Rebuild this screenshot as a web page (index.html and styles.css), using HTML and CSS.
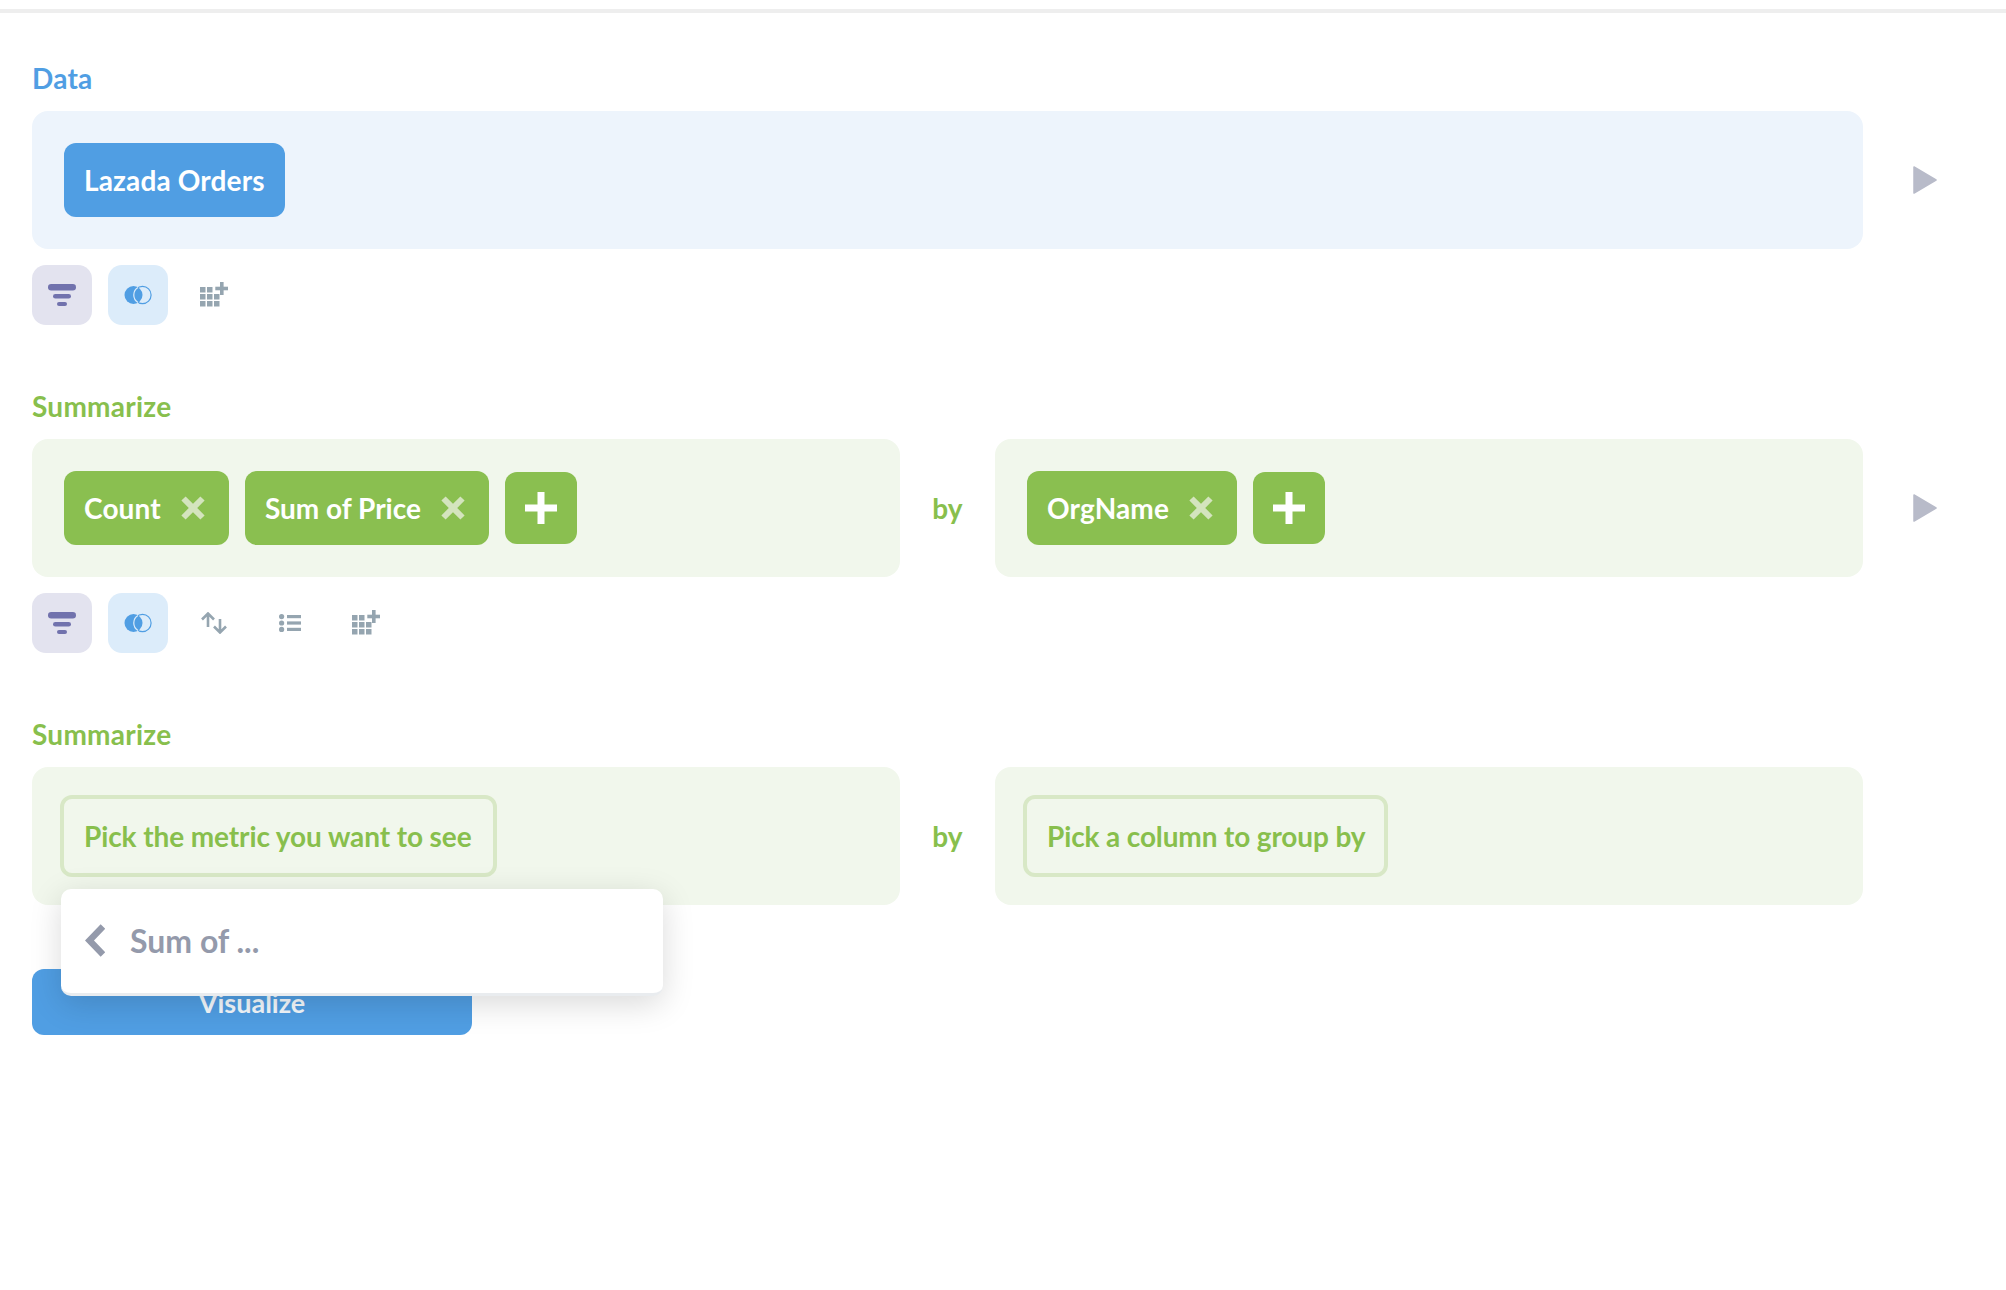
FILE: index.html
```html
<!DOCTYPE html>
<html lang="en">
<head>
<meta charset="utf-8">
<title>Notebook</title>
<link rel="stylesheet" href="styles.css">
</head>
<body>
<div class="topline"></div>
<main class="notebook">
  <section class="step">
    <h2 class="label label-blue">Data</h2>
    <div class="row">
      <div class="panel panel-blue panel-wide"><span class="chip chip-blue">Lazada Orders</span></div>
      <svg class="play" width="24" height="28" viewBox="0 0 24 28"><path d="M1 1 23 14 1 27Z" fill="#b8bbc9" stroke="#b8bbc9" stroke-width="1.5" stroke-linejoin="round"/></svg>
    </div>
    <div class="tools">
      <span class="tool tool-filter"><svg width="28" height="22" viewBox="0 0 28 22"><rect width="28" height="6.5" rx="3.2" fill="#7172ad"/><rect x="5" y="10" width="18" height="4.6" rx="2.3" fill="#7172ad"/><rect x="9" y="18" width="10" height="4" rx="2" fill="#7172ad"/></svg></span>
      <span class="tool tool-join"><svg width="28" height="20" viewBox="0 0 28 20"><circle cx="18.5" cy="10" r="8.6" fill="none" stroke="#509ee3" stroke-width="1.2"/><circle cx="9.5" cy="10" r="9" fill="#509ee3"/><path d="M14 2.6A8.6 8.6 0 0 0 14 17.4" fill="none" stroke="#dcecfa" stroke-width="1.2"/></svg></span>
      <span class="tool"><svg width="28" height="26" viewBox="0 0 28 26"><g fill="#95a5b0"><rect y="5" width="5.5" height="5.5"/><rect x="7" y="5" width="5.5" height="5.5"/><rect y="12" width="5.5" height="5.5"/><rect x="7" y="12" width="5.5" height="5.5"/><rect x="14" y="12" width="5.5" height="5.5"/><rect y="19" width="5.5" height="5.5"/><rect x="7" y="19" width="5.5" height="5.5"/><rect x="14" y="19" width="5.5" height="5.5"/><rect x="20" y="0" width="3.6" height="13"/><rect x="15.3" y="4.7" width="13" height="3.6"/></g></svg></span>
    </div>
  </section>

  <section class="step">
    <h2 class="label label-green">Summarize</h2>
    <div class="row">
      <div class="split">
        <div class="panel panel-green">
          <span class="chip chip-green">Count<svg class="x" width="24" height="24" viewBox="0 0 24 24"><path d="M2.5 2.5 21.5 21.5M21.5 2.5 2.5 21.5" stroke="#d4e4be" stroke-width="6"/></svg></span>
          <span class="chip chip-green chip-tight">Sum of Price<svg class="x" width="24" height="24" viewBox="0 0 24 24"><path d="M2.5 2.5 21.5 21.5M21.5 2.5 2.5 21.5" stroke="#d4e4be" stroke-width="6"/></svg></span>
          <span class="add"><svg width="32" height="32" viewBox="0 0 32 32"><path d="M16 0V32M0 16H32" stroke="#fff" stroke-width="7"/></svg></span>
        </div>
        <span class="by">by</span>
        <div class="panel panel-green">
          <span class="chip chip-green">OrgName<svg class="x" width="24" height="24" viewBox="0 0 24 24"><path d="M2.5 2.5 21.5 21.5M21.5 2.5 2.5 21.5" stroke="#d4e4be" stroke-width="6"/></svg></span>
          <span class="add"><svg width="32" height="32" viewBox="0 0 32 32"><path d="M16 0V32M0 16H32" stroke="#fff" stroke-width="7"/></svg></span>
        </div>
      </div>
      <svg class="play" width="24" height="28" viewBox="0 0 24 28"><path d="M1 1 23 14 1 27Z" fill="#b8bbc9" stroke="#b8bbc9" stroke-width="1.5" stroke-linejoin="round"/></svg>
    </div>
    <div class="tools">
      <span class="tool tool-filter"><svg width="28" height="22" viewBox="0 0 28 22"><rect width="28" height="6.5" rx="3.2" fill="#7172ad"/><rect x="5" y="10" width="18" height="4.6" rx="2.3" fill="#7172ad"/><rect x="9" y="18" width="10" height="4" rx="2" fill="#7172ad"/></svg></span>
      <span class="tool tool-join"><svg width="28" height="20" viewBox="0 0 28 20"><circle cx="18.5" cy="10" r="8.6" fill="none" stroke="#509ee3" stroke-width="1.2"/><circle cx="9.5" cy="10" r="9" fill="#509ee3"/><path d="M14 2.6A8.6 8.6 0 0 0 14 17.4" fill="none" stroke="#dcecfa" stroke-width="1.2"/></svg></span>
      <span class="tool"><svg width="26" height="22" viewBox="0 0 26 22"><path d="M7 15V1.5M1 7.5 7 1.5 13 7.5M19 7V20M13 14.5 19 20.5 25 14.5" fill="none" stroke="#95a5b0" stroke-width="2.6"/></svg></span>
      <span class="tool"><svg width="22" height="18" viewBox="0 0 22 18"><g fill="#95a5b0"><circle cx="2.6" cy="2.6" r="2.6"/><circle cx="2.6" cy="9" r="2.6"/><circle cx="2.6" cy="15.4" r="2.6"/><rect x="8" y="1" width="14" height="3.2"/><rect x="8" y="7.4" width="14" height="3.2"/><rect x="8" y="13.8" width="14" height="3.2"/></g></svg></span>
      <span class="tool"><svg width="28" height="26" viewBox="0 0 28 26"><g fill="#95a5b0"><rect y="5" width="5.5" height="5.5"/><rect x="7" y="5" width="5.5" height="5.5"/><rect y="12" width="5.5" height="5.5"/><rect x="7" y="12" width="5.5" height="5.5"/><rect x="14" y="12" width="5.5" height="5.5"/><rect y="19" width="5.5" height="5.5"/><rect x="7" y="19" width="5.5" height="5.5"/><rect x="14" y="19" width="5.5" height="5.5"/><rect x="20" y="0" width="3.6" height="13"/><rect x="15.3" y="4.7" width="13" height="3.6"/></g></svg></span>
    </div>
  </section>

  <section class="step step-last">
    <h2 class="label label-green">Summarize</h2>
    <div class="row">
      <div class="split">
        <div class="panel panel-green panel-pick"><span class="pick">Pick the metric you want to see</span></div>
        <span class="by">by</span>
        <div class="panel panel-green panel-pick"><span class="pick pick-short">Pick a column to group by</span></div>
      </div>
    </div>
    <div class="popover">
      <svg width="20" height="33" viewBox="0 0 20 33"><path d="M18 2.5 4.5 16.5 18 30.5" fill="none" stroke="#949aab" stroke-width="6.5"/></svg>
      <span class="popover-text">Sum of ...</span>
    </div>
  </section>

  <button class="visualize" type="button">Visualize</button>
</main>
</body>
</html>
```
FILE: styles.css
```css
* { box-sizing: border-box; }
html, body { margin: 0; background: #fff; }
body {
  height: 1290px;
  overflow: hidden;
  font-family: Lato, "Open Sans", sans-serif;
  font-weight: 700;
  font-size: 28px;
}
.topline { height: 4px; margin-top: 9px; background: #eeeeee; }
.notebook { padding: 45px 32px 0; }
.step { position: relative; height: 328px; }
.step-last { height: 255px; }
.label { margin: 0 0 13px; height: 40px; font-size: 28px; line-height: 40px; font-weight: 700; letter-spacing: 0.25px; }
.label-blue { color: #509ee3; }
.label-green { color: #88bf4d; }
.row { display: flex; align-items: center; }
.panel {
  display: flex;
  align-items: center;
  gap: 16px;
  height: 138px;
  padding: 0 32px;
  border-radius: 16px;
}
.panel-wide { width: 1831px; }
.panel-blue { background: #edf4fc; }
.panel-green { background: #f1f7ec; width: 868px; }
.panel-pick { padding: 0 28px; }
.split { display: flex; align-items: center; width: 1831px; }
.by { flex: 1; text-align: center; color: #88bf4d; }
.chip {
  display: flex;
  align-items: center;
  height: 74px;
  padding: 0 20px;
  border-radius: 12px;
  color: #fff;
  letter-spacing: 0.15px;
}
.chip-blue { background: #509ee3; }
.chip-green { background: #8abf50; gap: 20px; padding-right: 24px; }
.chip-tight { letter-spacing: 0; }
.add {
  display: flex;
  align-items: center;
  justify-content: center;
  width: 72px;
  height: 72px;
  border-radius: 12px;
  background: #8abf50;
}
.play { margin-left: 50px; flex: none; }
.tools { display: flex; gap: 16px; margin-top: 16px; }
.tool {
  display: flex;
  align-items: center;
  justify-content: center;
  width: 60px;
  height: 60px;
  border-radius: 14px;
}
.tool-filter { background: #e3e3ef; }
.tool-join { background: #dcecfa; }
.pick {
  display: flex;
  align-items: center;
  height: 82px;
  padding: 0 21px 0 20px;
  border: 4px solid #d8e8c6;
  border-radius: 12px;
  color: #88bf4d;
  letter-spacing: -0.1px;
}
.pick-short { padding-right: 19px; letter-spacing: -0.13px; }
.popover {
  position: absolute;
  top: 175px;
  left: 29px;
  display: flex;
  align-items: center;
  gap: 25px;
  width: 602px;
  height: 107px;
  padding: 0 0 2px 24px;
  background: #fff;
  border-bottom: 3px solid #e9ecef;
  border-radius: 10px;
  box-shadow: 0 8px 32px rgba(0, 0, 0, 0.15);
  z-index: 2;
}
.popover-text { color: #949aab; font-size: 32px; }
.visualize {
  display: block;
  width: 440px;
  height: 66px;
  padding: 0;
  border: 0;
  border-radius: 12px;
  background: #509ee3;
  color: #f4f9fd;
  font: inherit;
  font-size: 27px;
}
```
